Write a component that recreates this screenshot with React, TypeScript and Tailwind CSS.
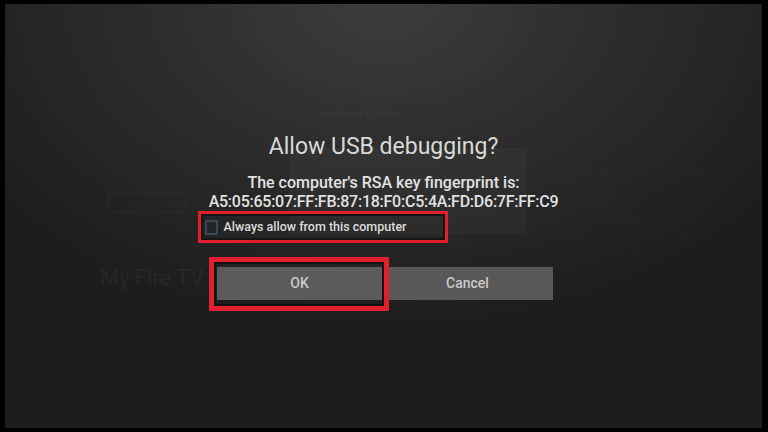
const font = { fontFamily: 'Roboto, "Noto Sans", sans-serif' }

const helpLines = [
  'Allows apps from unknown sources',
  'to be installed on this device.',
  'Use with caution.',
  'Enables debugging over the USB or',
  'network connection so developer',
  'tools can reach your Fire TV device',
  'while it is running.',
]

function GhostScreen() {
  return (
    <div className="flex h-full">
      <div className="w-[284px] shrink-0 pl-[95px] pt-[189px]">
        <div className="ml-[8px] h-[19px] w-[78px] border border-white/[0.04]" />
        <div className="mt-[53px] text-[22px] leading-[26px] text-white/[0.035]">My Fire TV</div>
      </div>
      <div className="w-[238px] shrink-0 pt-[105px]">
        <div className="ml-[30px] text-[10px] leading-[12px] text-white/[0.035]">Developer Options</div>
        <div className="mt-[27px] h-[87px] w-full bg-white/[0.03]" />
      </div>
      <div className="ml-[40px] pt-[160px] text-[9px] leading-[13px] text-white/[0.04]">
        {helpLines.map((l) => (
          <div key={l}>{l}</div>
        ))}
      </div>
    </div>
  )
}

export default function App() {
  return (
    <div className="h-[432px] w-[768px] bg-black pt-[4px] pr-[6px] pb-[4px] pl-[5px]" style={font}>
      <div className="relative h-full w-full overflow-hidden bg-[radial-gradient(ellipse_75%_90%_at_50%_0%,#3c3c3c_0%,#2b2b2b_45%,#1d1d1d_85%)]">
        <GhostScreen />

        {/* dialog */}
        <div className="absolute inset-0 flex flex-col items-center pt-[130px]">
          <h1 className="text-[23px] leading-[26px] font-normal text-[#d9d9d9]">Allow USB debugging?</h1>
          <div className="mt-[13px] text-center text-[16px] leading-[19px] font-medium text-[#e2e2e2]">
            <p>The computer's RSA key fingerprint is:</p>
            <p className="tracking-[-0.25px]">A5:05:65:07:FF:FB:87:18:F0:C5:4A:FD:D6:7F:FF:C9</p>
          </div>

          <div className="w-[372px]">
            <div className="relative flex h-[32px] w-[250px] items-center pl-[7px]">
              <span className="h-[15px] w-[13px] rounded-[1px] border-2 border-[#3a4955]" />
              <span className="ml-[6px] text-[12.5px] font-medium text-[#dcdcdc]">Always allow from this computer</span>
              <div className="absolute inset-0 border-[3px] border-[#e0202c] shadow-[inset_0_0_0_2px_#151515]" />
            </div>

            <div className="mt-[24px] ml-[19px] flex h-[33px] text-[14px] font-medium text-[#c9c9c9]">
              <button className="relative w-[166px] bg-[#5b5b5b]">
                OK
                <div className="absolute -top-[10px] -right-[6px] -bottom-[11px] -left-[8px] z-10 border-[5px] border-[#e0202c] shadow-[inset_0_0_0_2px_#121212]" />
              </button>
              <button className="w-[170px] bg-[#585858]">Cancel</button>
            </div>
          </div>
        </div>
      </div>
    </div>
  )
}
